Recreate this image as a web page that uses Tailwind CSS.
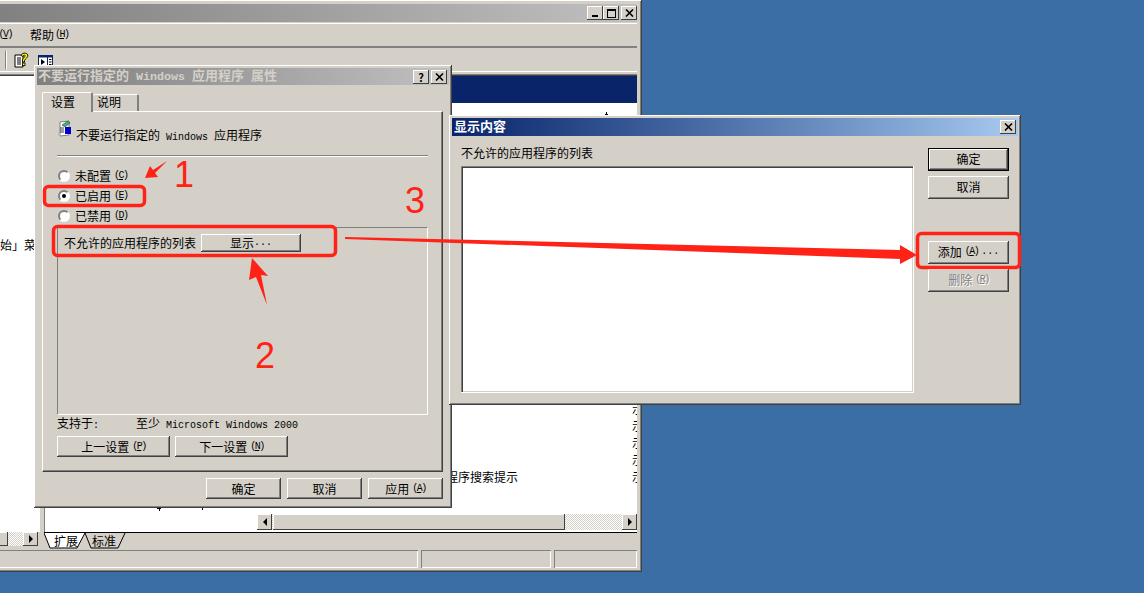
<!DOCTYPE html>
<html lang="zh">
<head>
<meta charset="utf-8">
<script src="https://cdn.jsdelivr.net/npm/@tailwindcss/browser@4"></script>
</head>
<body class="m-0">
<div class="relative w-[1144px] h-[593px] overflow-hidden bg-[#3a6ea5] text-[12px] leading-[14px] text-black font-['Noto_Sans_CJK_SC','Liberation_Sans',sans-serif]">

  <!-- main console window -->
  <div class="absolute left-[-10px] top-0 w-[652px] h-[572px] flex flex-col pt-[4px] pr-[5px] pb-[3px] bg-[#d4d0c8] shadow-[inset_-1px_-1px_0_#404040,inset_1px_1px_0_#fff,inset_-2px_-2px_0_#808080]">
    <div class="h-[18px] shrink-0 flex items-center justify-end bg-gradient-to-r from-[#808080] to-[#c0c0c0]">
      <div class="w-[16px] h-[14px] flex items-end justify-center pb-[3px] bg-[#d4d0c8] shadow-[inset_-1px_-1px_0_#404040,inset_1px_1px_0_#fff]"><div class="w-[6px] h-[2px] bg-black"></div></div>
      <div class="w-[16px] h-[14px] flex items-center justify-center bg-[#d4d0c8] shadow-[inset_-1px_-1px_0_#404040,inset_1px_1px_0_#fff]"><div class="w-[9px] h-[9px] border border-black border-t-2"></div></div>
      <div class="w-[16px] h-[14px] ml-[2px] flex items-center justify-center bg-[#d4d0c8] shadow-[inset_-1px_-1px_0_#404040,inset_1px_1px_0_#fff]"><svg width="9" height="8" viewBox="0 0 9 8"><path d="M1 0.5L8 7.5M8 0.5L1 7.5" stroke="#000" stroke-width="1.6"/></svg></div>
    </div>
    <div class="h-[25px] mt-[1px] shrink-0 flex items-center pl-[2px] border-t border-white border-b-2 border-b-[#808080]">
      <span class="w-[20px] text-right font-['Liberation_Mono'] text-[10px] tracking-[-1.5px]">(<u>V</u>)</span>
      <span class="ml-[18px]">帮助</span><span class="ml-[1px] font-['Liberation_Mono'] text-[10px] tracking-[-1.5px]">(<u>H</u>)</span>
    </div>
    <div class="h-[24px] shrink-0 flex items-center pl-[15px] border-b border-white">
      <div class="w-[1px] h-[18px] bg-[#808080] shadow-[1px_0_0_#fff]"></div>
      <svg class="ml-[8px] mt-[1px]" width="16" height="16" viewBox="0 0 16 16">
        <path d="M1 3H9V15H1Z" fill="#fff" stroke="#000"/>
        <path d="M3 6H7M3 8H7M3 10H7M3 12H7" stroke="#000"/>
        <path d="M7 3.5C7.5 1 12.5 0 13.8 3C14.5 5.5 11 6.5 10.5 8.5V10H8.5V8C8.8 6 11.5 5 11 3.5C10.5 2.5 9.5 3 9 4.5Z" fill="#ffff00" stroke="#000" stroke-width="0.9"/>
        <rect x="8.5" y="11" width="2.5" height="2.6" fill="#ffff00" stroke="#000" stroke-width="0.8"/>
      </svg>
      <svg class="ml-[8px] mt-[2px]" width="15" height="12" viewBox="0 0 15 12">
        <rect x="0.5" y="0.5" width="14" height="11" fill="#fff" stroke="#0a246a"/>
        <path d="M0 1.5H15" stroke="#0a246a" stroke-width="2"/>
        <path d="M9.5 1V12" stroke="#0a246a"/>
        <path d="M3 4V10L7 7Z" fill="#000"/>
        <path d="M11 4.5H13.5M11 7H13.5M11 9.5H13.5" stroke="#000"/>
      </svg>
    </div>
    <div class="h-[2px] mt-[2px] shrink-0 bg-[#808080] border-b border-[#404040]"></div>

    <!-- panes -->
    <div class="h-[456px] shrink-0 flex">
      <div class="w-[54px] shrink-0 flex flex-col bg-white relative border-r-[4px] border-[#d4d0c8]">
        <div class="mt-[162px] pl-[10px] whitespace-nowrap">始」菜单</div>
      </div>
      <div class="flex-1 min-w-0 bg-white relative overflow-hidden border-l border-[#808080]">
        <div class="h-[27px] bg-[#0a246a]"></div>
        <div class="absolute left-[401px] top-[394px] whitespace-nowrap">程序搜索提示</div>
        <div class="absolute left-[587px] top-[326px] whitespace-nowrap">示</div>
        <div class="absolute left-[587px] top-[343px] whitespace-nowrap">示</div>
        <div class="absolute left-[587px] top-[360px] whitespace-nowrap">示</div>
        <div class="absolute left-[587px] top-[377px] whitespace-nowrap">示</div>
        <div class="absolute left-[587px] top-[394px] whitespace-nowrap">示</div>
        <!-- horizontal scrollbar -->
        <div class="absolute left-[212px] right-0 bottom-[2px] h-[16px] flex bg-[repeating-conic-gradient(#d4d0c8_0_25%,#fff_0_50%)] bg-[length:2px_2px]">
          <div class="w-[15px] flex items-center justify-center bg-[#d4d0c8] shadow-[inset_-1px_-1px_0_#404040,inset_1px_1px_0_#fff]"><div class="w-0 h-0 border-y-[4px] border-y-transparent border-r-[4px] border-r-black"></div></div>
          <div class="w-[292px] ml-[1px] bg-[#d4d0c8] shadow-[inset_-1px_-1px_0_#404040,inset_1px_1px_0_#fff]"></div>
          <div class="flex-1"></div>
          <div class="w-[15px] flex items-center justify-center bg-[#d4d0c8] shadow-[inset_-1px_-1px_0_#404040,inset_1px_1px_0_#fff]"><div class="w-0 h-0 border-y-[4px] border-y-transparent border-l-[4px] border-l-black"></div></div>
        </div>
      </div>
    </div>

    <!-- tab strip -->
    <div class="h-[18px] shrink-0 flex">
      <div class="w-[54px] shrink-0 flex h-[14px] pr-[6px] bg-[#d4d0c8]">
        <div class="w-[18px] bg-[#d4d0c8] shadow-[inset_-1px_-1px_0_#404040,inset_0_1px_0_#fff]"></div>
        <div class="flex-1 bg-[repeating-conic-gradient(#d4d0c8_0_25%,#fff_0_50%)] bg-[length:2px_2px]"></div>
        <div class="w-[15px] flex items-center justify-center bg-[#d4d0c8] shadow-[inset_-1px_-1px_0_#404040,inset_1px_1px_0_#fff]"><div class="w-0 h-0 border-y-[4px] border-y-transparent border-l-[4px] border-l-black"></div></div>
      </div>
      <div class="flex-1 border-t border-black flex relative">
        <svg class="absolute left-0 top-0" width="84" height="16" viewBox="0 0 84 16">
          <path d="M0 0L6 15H33L41 0Z" fill="#fff"/>
          <path d="M0 0L6 15H33L41 0M41 0L47 15H74L81 0" fill="none" stroke="#000"/>
        </svg>
        <span class="relative ml-[10px] mt-[1px]">扩展</span>
        <span class="relative ml-[14px] mt-[1px]">标准</span>
      </div>
    </div>

    <!-- status bar -->
    <div class="h-[18px] shrink-0 flex gap-[3px]">
      <div class="w-[428px] shadow-[inset_0_1px_0_#808080,inset_-1px_-1px_0_#fff]"></div>
      <div class="w-[130px] shadow-[inset_1px_1px_0_#808080,inset_-1px_-1px_0_#fff]"></div>
      <div class="w-[83px] shadow-[inset_1px_1px_0_#808080,inset_-1px_-1px_0_#fff]"></div>
    </div>
  </div>

  <!-- properties dialog -->
  <div class="absolute left-[34px] top-[65px] w-[418px] h-[443px] p-[3px] bg-[#d4d0c8] shadow-[inset_-1px_-1px_0_#404040,inset_1px_1px_0_#fff,inset_-2px_-2px_0_#808080]">
    <div class="h-[17px] flex items-center pl-[1px] pr-[2px] bg-gradient-to-r from-[#808080] to-[#c0c0c0] text-[#d4d0c8] font-bold text-[13px] whitespace-nowrap">
      <span class="mt-[-2px]">不要运行指定的<span class="font-['Liberation_Mono'] text-[11.67px]"> Windows </span>应用程序<span class="font-['Liberation_Mono'] text-[11.67px]"> </span>属性</span>
      <div class="ml-auto w-[16px] h-[14px] flex items-center justify-center bg-[#d4d0c8] text-black text-[11px] font-bold shadow-[inset_-1px_-1px_0_#404040,inset_1px_1px_0_#fff]">?</div>
      <div class="ml-[2px] w-[16px] h-[14px] flex items-center justify-center bg-[#d4d0c8] shadow-[inset_-1px_-1px_0_#404040,inset_1px_1px_0_#fff]"><svg width="9" height="8" viewBox="0 0 9 8"><path d="M1 0.5L8 7.5M8 0.5L1 7.5" stroke="#000" stroke-width="1.6"/></svg></div>
    </div>
    <div class="pl-[5px] pt-[7px]">
      <div class="h-[19px] flex items-end relative z-10">
        <div class="w-[51px] h-[20px] mb-[-1px] pl-[8px] pt-[2px] bg-[#d4d0c8] rounded-t-[2px] border-t border-l border-white border-r-2 border-r-[#808080]">设置</div>
        <div class="w-[46px] h-[17px] pl-[4px] rounded-t-[2px] border-t border-white border-r-2 border-r-[#808080]">说明</div>
      </div>
      <div class="w-[401px] h-[361px] px-[14px] pt-[8px] border border-white border-r-[#404040] border-b-[#404040] shadow-[inset_-1px_-1px_0_#808080]">
        <div class="h-[25px] flex items-end">
          <svg class="mb-[8px]" width="17" height="17" viewBox="0 0 17 17">
            <path d="M3 2L12 1V15L3 16Z" fill="#fff" stroke="#808080"/>
            <path d="M5 5L11 1L13 3L8 7Z" fill="#3cb371" stroke="#404040" stroke-width="0.6"/>
            <rect x="8" y="7" width="6" height="7" fill="#0000c8"/>
            <path d="M3 8H7M3 10H7M3 12H7" stroke="#404040"/>
            <path d="M1 12L4 15L1 16Z" fill="#c0c0c0"/>
          </svg>
          <span class="ml-[2px]">不要运行指定的<span class="font-['Liberation_Mono'] text-[10px]"> Windows </span>应用程序</span>
        </div>
        <div class="h-[2px] mt-[10px] bg-[#808080] border-b border-white"></div>
        <div class="mt-[9px] h-[20px] flex items-center">
          <div class="ml-[1px] w-[12px] h-[12px] rounded-full bg-white border-2 border-[#808080] border-r-white border-b-white"></div>
          <span class="ml-[5px]">未配置</span><span class="ml-[3px] font-['Liberation_Mono'] text-[10px] tracking-[-1.5px]">(<u>C</u>)</span>
        </div>
        <div class="h-[20px] flex items-center">
          <div class="ml-[1px] w-[12px] h-[12px] rounded-full bg-white border-2 border-[#808080] border-r-white border-b-white flex items-center justify-center"><div class="w-[4px] h-[4px] rounded-full bg-black"></div></div>
          <span class="ml-[5px]">已启用</span><span class="ml-[3px] font-['Liberation_Mono'] text-[10px] tracking-[-1.5px]">(<u>E</u>)</span>
        </div>
        <div class="h-[20px] flex items-center">
          <div class="ml-[1px] w-[12px] h-[12px] rounded-full bg-white border-2 border-[#808080] border-r-white border-b-white"></div>
          <span class="ml-[5px]">已禁用</span><span class="ml-[3px] font-['Liberation_Mono'] text-[10px] tracking-[-1.5px]">(<u>D</u>)</span>
        </div>
        <div class="mt-[1px] h-[188px] pt-[6px] pl-[6px] border border-[#808080] border-r-white border-b-white">
          <div class="h-[18px] flex items-center">
            <span>不允许的应用程序的列表</span>
            <div class="ml-[5px] w-[100px] h-[18px] flex items-center justify-center bg-[#d4d0c8] shadow-[inset_-1px_-1px_0_#404040,inset_1px_1px_0_#fff,inset_-2px_-2px_0_#808080]">显示<span class="font-['Liberation_Mono'] text-[10px]">...</span></div>
          </div>
        </div>
        <div class="h-[18px] flex items-center">
          <span class="w-[79px]">支持于<span class="font-['Liberation_Mono'] text-[10px]">:</span></span>
          <span>至少<span class="font-['Liberation_Mono'] text-[10px]"> Microsoft Windows 2000</span></span>
        </div>
        <div class="mt-[3px] flex gap-[5px]">
          <div class="w-[113px] h-[21px] flex items-center justify-center bg-[#d4d0c8] shadow-[inset_-1px_-1px_0_#404040,inset_1px_1px_0_#fff,inset_-2px_-2px_0_#808080]">上一设置<span class="ml-[3px] font-['Liberation_Mono'] text-[10px] tracking-[-1.5px]">(<u>P</u>)</span></div>
          <div class="w-[113px] h-[21px] flex items-center justify-center bg-[#d4d0c8] shadow-[inset_-1px_-1px_0_#404040,inset_1px_1px_0_#fff,inset_-2px_-2px_0_#808080]">下一设置<span class="ml-[3px] font-['Liberation_Mono'] text-[10px] tracking-[-1.5px]">(<u>N</u>)</span></div>
        </div>
      </div>
      <div class="w-[401px] mt-[6px] flex justify-end gap-[6px]">
        <div class="w-[75px] h-[21px] flex items-center justify-center shadow-[inset_-1px_-1px_0_#404040,inset_1px_1px_0_#fff,inset_-2px_-2px_0_#808080]">确定</div>
        <div class="w-[75px] h-[21px] flex items-center justify-center shadow-[inset_-1px_-1px_0_#404040,inset_1px_1px_0_#fff,inset_-2px_-2px_0_#808080]">取消</div>
        <div class="w-[75px] h-[21px] flex items-center justify-center shadow-[inset_-1px_-1px_0_#404040,inset_1px_1px_0_#fff,inset_-2px_-2px_0_#808080]">应用<span class="ml-[3px] font-['Liberation_Mono'] text-[10px] tracking-[-1.5px]">(<u>A</u>)</span></div>
      </div>
    </div>
  </div>

  <!-- show contents dialog -->
  <div class="absolute left-[449px] top-[115px] w-[572px] h-[290px] p-[3px] bg-[#d4d0c8] shadow-[inset_-1px_-1px_0_#404040,inset_1px_1px_0_#fff,inset_-2px_-2px_0_#808080]">
    <div class="h-[18px] flex items-center pl-[2px] pr-[2px] bg-gradient-to-r from-[#0a246a] to-[#a6caf0] text-white font-bold text-[13px]">
      <span class="mt-[-2px]">显示内容</span>
      <div class="ml-auto w-[16px] h-[14px] flex items-center justify-center bg-[#d4d0c8] shadow-[inset_-1px_-1px_0_#404040,inset_1px_1px_0_#fff]"><svg width="9" height="8" viewBox="0 0 9 8"><path d="M1 0.5L8 7.5M8 0.5L1 7.5" stroke="#000" stroke-width="1.6"/></svg></div>
    </div>
    <div class="flex pl-[9px]">
      <div class="w-[453px] shrink-0 pt-[10px]">
        <div class="h-[15px]">不允许的应用程序的列表</div>
        <div class="mt-[5px] h-[227px] bg-white shadow-[inset_1px_1px_0_#808080,inset_2px_2px_0_#404040,inset_-1px_-1px_0_#d4d0c8,inset_-2px_-2px_0_#fff] border-r border-b border-white"></div>
      </div>
      <div class="ml-[14px] w-[81px] pt-[12px] flex flex-col">
        <div class="h-[23px] pb-[2px] flex items-center justify-center border border-black shadow-[inset_-1px_-1px_0_#404040,inset_1px_1px_0_#fff,inset_-2px_-2px_0_#808080]">确定</div>
        <div class="mt-[5px] h-[23px] pb-[2px] flex items-center justify-center shadow-[inset_-1px_-1px_0_#404040,inset_1px_1px_0_#fff,inset_-2px_-2px_0_#808080]">取消</div>
        <div class="mt-[42px] h-[23px] pb-[2px] flex items-center justify-center shadow-[inset_-1px_-1px_0_#404040,inset_1px_1px_0_#fff,inset_-2px_-2px_0_#808080]">添加<span class="ml-[3px] font-['Liberation_Mono'] text-[10px] tracking-[-1.5px]">(<u>A</u>)</span><span class="ml-[3px] font-['Liberation_Mono'] text-[10px]">...</span></div>
        <div class="mt-[5px] h-[23px] pb-[2px] flex items-center justify-center text-[#808080] [text-shadow:1px_1px_0_#fff] shadow-[inset_-1px_-1px_0_#404040,inset_1px_1px_0_#fff,inset_-2px_-2px_0_#808080]">删除<span class="ml-[3px] font-['Liberation_Mono'] text-[10px] tracking-[-1.5px]">(<u>R</u>)</span></div>
      </div>
    </div>
  </div>

  <!-- red annotations and text remnants peeking past the dialogs -->
  <svg class="absolute left-0 top-0 pointer-events-none" width="1144" height="593" viewBox="0 0 1144 593">
    <path d="M157 508.500H161M159.500 508V511M202.500 508V510M606.500 112V115M605 114.500H608" stroke="#000" fill="none"/>
    <rect x="44.500" y="186.500" width="100" height="19" rx="4" fill="none" stroke="#fe2217" stroke-width="3.500"/>
    <rect x="53.500" y="226.500" width="282" height="29" rx="4" fill="none" stroke="#fe2217" stroke-width="3.500"/>
    <rect x="917.500" y="233.500" width="102" height="34" rx="4" fill="none" stroke="#fe2217" stroke-width="3.500"/>
    <path d="M145 178L150 166L153 170L167 161L155 173L158 177Z" fill="#fe2217"/>
    <path d="M252 258L268 276L261 275L267 305L256 277L249 280Z" fill="#fe2217"/>
    <path d="M345 237L900 250V245L917 255L900 264V259L345 239Z" fill="#fe2217"/>
  </svg>
  <span class="absolute left-[174px] top-[154px] text-[36px] leading-[41px] text-[#fe2217] font-['Liberation_Sans',sans-serif]">1</span>
  <span class="absolute left-[405px] top-[180px] text-[36px] leading-[41px] text-[#fe2217] font-['Liberation_Sans',sans-serif]">3</span>
  <span class="absolute left-[255px] top-[335px] text-[36px] leading-[41px] text-[#fe2217] font-['Liberation_Sans',sans-serif]">2</span>
</div>
</body>
</html>
